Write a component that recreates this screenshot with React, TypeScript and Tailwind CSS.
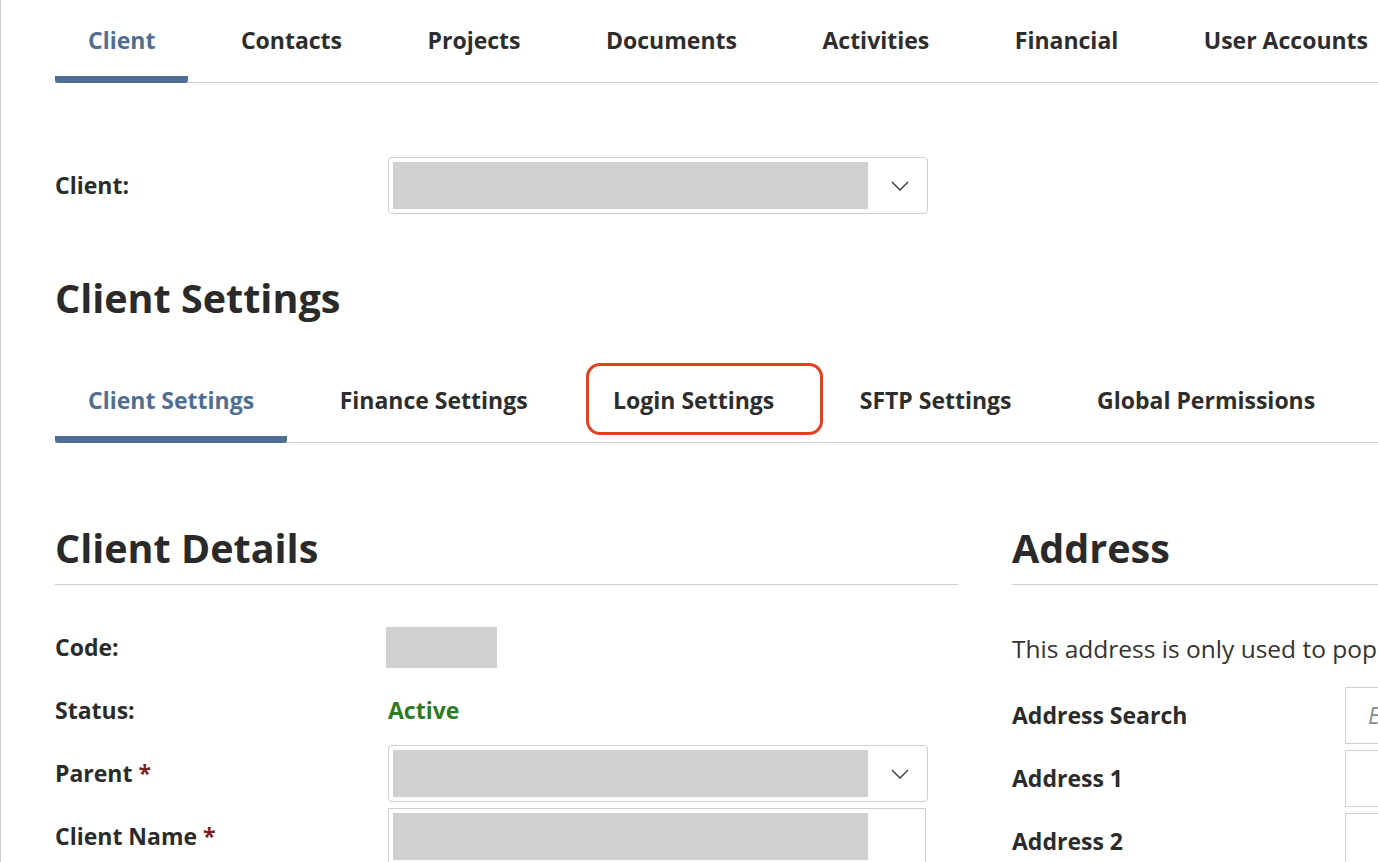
import React from "react";

const BLUE = "bg-[#506e92]";

function Chevron() {
  return (
    <svg width="18" height="10" viewBox="0 0 18 10" fill="none" className="shrink-0">
      <polyline points="1,1 9,9 17,1" stroke="#3a3a3a" strokeWidth="1.4" fill="none" />
    </svg>
  );
}

function Select({ w = "w-[540px]" }: { w?: string }) {
  return (
    <div className={`${w} h-[57px] rounded-[4px] border border-[#cfcfcf] p-[4px] flex items-center`}>
      <div className="h-full w-[475px] bg-[#d0d0d0]" />
      <div className="flex-1 flex justify-center pl-[8px]">
        <Chevron />
      </div>
    </div>
  );
}

function Tabs({ items, active, highlight }: { items: string[]; active: number; highlight?: number }) {
  return (
    <nav className="flex gap-[19.5px] border-b border-[#d0d0d0] whitespace-nowrap">
      {items.map((t, i) => (
        <div
          key={t}
          className={`relative h-[82px] pb-[2px] px-[33px] flex items-center shrink-0 text-[23px] font-bold ${
            i === active ? "text-[#506e92]" : "text-[#2d2d2d]"
          }`}
        >
          {t}
          {i === active && (
            <div className={`absolute left-0 right-0 -bottom-px h-[7px] rounded-b-[3px] ${BLUE}`} />
          )}
          {i === highlight && (
            <div className="absolute left-[6px] top-[3px] w-[237px] h-[72px] rounded-[14px] border-[3px] border-[#e2401f]" />
          )}
        </div>
      ))}
    </nav>
  );
}

function Row({ label, req, children }: { label: string; req?: boolean; children: React.ReactNode }) {
  return (
    <div className="flex items-center h-[57px]">
      <div className="w-[333px] shrink-0 text-[23px] font-bold text-[#2b2b2b]">
        {label}
        {req && <span className="text-[#7b1f1f]"> *</span>}
      </div>
      {children}
    </div>
  );
}

export default function App() {
  return (
    <div className="h-[862px] w-[1378px] overflow-hidden border-l border-[#cfcfcf] bg-white font-['Open_Sans',sans-serif] text-[#2b2b2b]">
      <div className="pl-[54px]">
        <Tabs
          items={["Client", "Contacts", "Projects", "Documents", "Activities", "Financial", "User Accounts"]}
          active={0}
        />

        <div className="mt-[74px] flex items-center">
          <div className="w-[333px] shrink-0 text-[23px] font-bold">Client:</div>
          <Select />
        </div>

        <h1 className="mt-[60px] text-[39.5px] leading-[48px] font-bold text-[#2a2a2a]">Client Settings</h1>

        <div className="mt-[38px]">
          <Tabs
            items={["Client Settings", "Finance Settings", "Login Settings", "SFTP Settings", "Global Permissions"]}
            active={0}
            highlight={2}
          />
        </div>

        <div className="mt-[81px] flex gap-[54px]">
          <section className="w-[903px] shrink-0">
            <h2 className="text-[39.5px] leading-[48px] font-bold text-[#2a2a2a] pb-[12px] border-b border-[#d0d0d0]">
              Client Details
            </h2>
            <div className="mt-[34px] flex flex-col gap-[6px]">
              <Row label="Code:">
                <div className="ml-[-2px] w-[111px] h-[41px] bg-[#d0d0d0]" />
              </Row>
              <Row label="Status:">
                <span className="text-[23px] font-bold text-[#2f7a1f]">Active</span>
              </Row>
              <Row label="Parent" req>
                <Select />
              </Row>
              <Row label="Client Name" req>
                <div className="w-[538px] h-[57px] border border-[#cfcfcf] p-[4px]">
                  <div className="h-full w-[475px] bg-[#d0d0d0]" />
                </div>
              </Row>
            </div>
          </section>

          <section className="w-[903px] shrink-0">
            <h2 className="text-[39.5px] leading-[48px] font-bold text-[#2a2a2a] pb-[12px] border-b border-[#d0d0d0]">
              Address
            </h2>
            <p className="mt-[48px] text-[24.5px] leading-[32px] text-[#333] whitespace-nowrap">
              This address is only used to populate invoice details for this client.
            </p>
            <div className="mt-[22px] flex flex-col gap-[6px]">
              <Row label="Address Search">
                <div className="w-[540px] h-[57px] border border-[#cfcfcf] flex items-center px-[22px] text-[23px] italic text-[#8a8a8a]">
                  Enter an address
                </div>
              </Row>
              <Row label="Address 1">
                <div className="w-[540px] h-[57px] border border-[#cfcfcf]" />
              </Row>
              <Row label="Address 2">
                <div className="w-[540px] h-[57px] border border-[#cfcfcf]" />
              </Row>
            </div>
          </section>
        </div>
      </div>
    </div>
  );
}
